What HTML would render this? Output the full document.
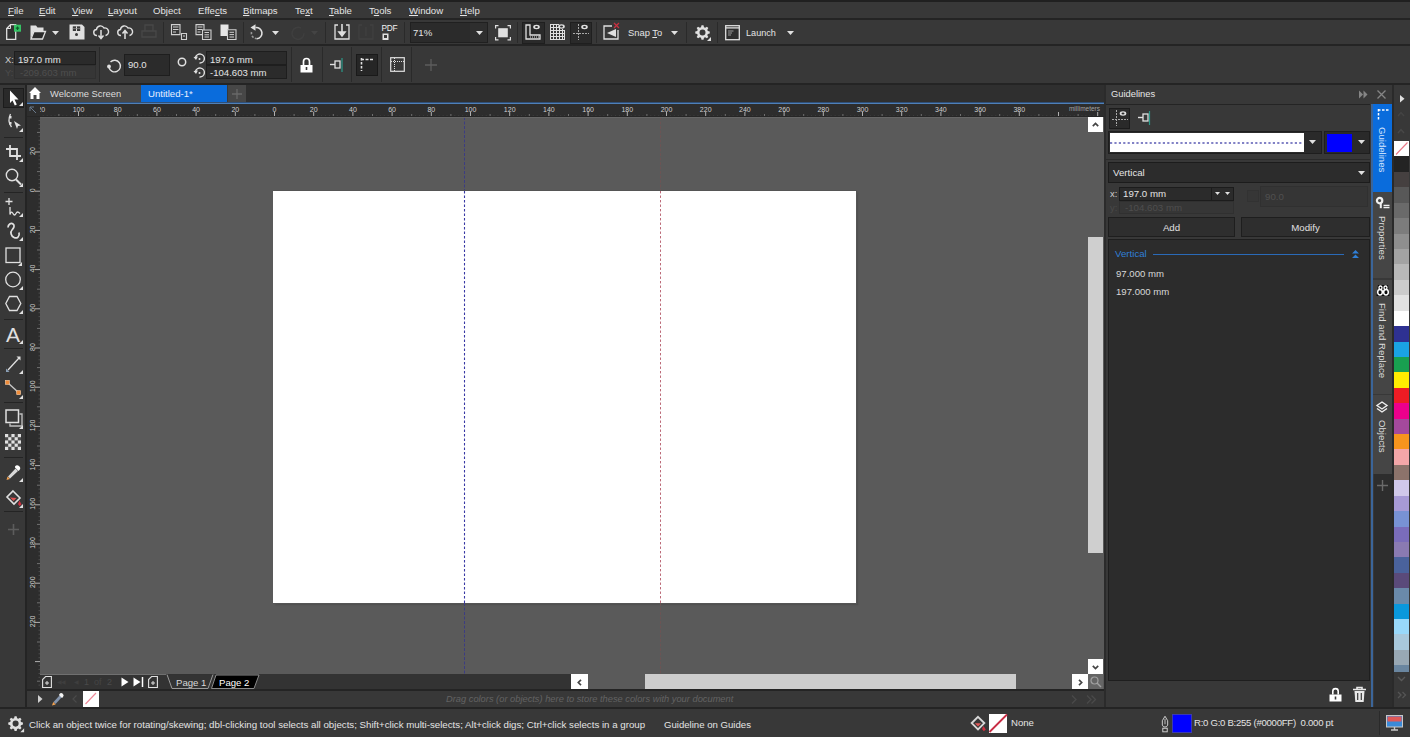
<!DOCTYPE html>
<html><head><meta charset="utf-8"><title>CorelDRAW - Untitled-1</title>
<style>
html,body{margin:0;padding:0;background:#383838;overflow:hidden}
body{width:1410px;height:737px;position:relative;font-family:"Liberation Sans",sans-serif;}
div,span,svg{position:absolute;box-sizing:border-box}
span{white-space:nowrap}
svg{overflow:visible}
u{text-decoration:underline;text-underline-offset:1px}
</style></head><body>
<div style="left:0px;top:0px;width:1410px;height:2px;background:#202020;"></div>
<div style="left:0px;top:18px;width:1410px;height:2px;background:#242424;"></div>
<span style="left:8px;top:3px;height:15px;line-height:15px;font-size:9.6px;color:#e4e4e4;"><u>F</u>ile</span>
<span style="left:39px;top:3px;height:15px;line-height:15px;font-size:9.6px;color:#e4e4e4;"><u>E</u>dit</span>
<span style="left:72px;top:3px;height:15px;line-height:15px;font-size:9.6px;color:#e4e4e4;"><u>V</u>iew</span>
<span style="left:108px;top:3px;height:15px;line-height:15px;font-size:9.6px;color:#e4e4e4;"><u>L</u>ayout</span>
<span style="left:153px;top:3px;height:15px;line-height:15px;font-size:9.6px;color:#e4e4e4;">Ob<u>j</u>ect</span>
<span style="left:198px;top:3px;height:15px;line-height:15px;font-size:9.6px;color:#e4e4e4;">Effe<u>c</u>ts</span>
<span style="left:243px;top:3px;height:15px;line-height:15px;font-size:9.6px;color:#e4e4e4;"><u>B</u>itmaps</span>
<span style="left:295px;top:3px;height:15px;line-height:15px;font-size:9.6px;color:#e4e4e4;">Te<u>x</u>t</span>
<span style="left:329px;top:3px;height:15px;line-height:15px;font-size:9.6px;color:#e4e4e4;"><u>T</u>able</span>
<span style="left:369px;top:3px;height:15px;line-height:15px;font-size:9.6px;color:#e4e4e4;">T<u>o</u>ols</span>
<span style="left:409px;top:3px;height:15px;line-height:15px;font-size:9.6px;color:#e4e4e4;"><u>W</u>indow</span>
<span style="left:460px;top:3px;height:15px;line-height:15px;font-size:9.6px;color:#e4e4e4;"><u>H</u>elp</span>
<div style="left:0px;top:44px;width:1410px;height:2px;background:#242424;"></div>
<div style="left:163px;top:22px;width:1px;height:21px;background:#2a2a2a;"></div>
<div style="left:243px;top:22px;width:1px;height:21px;background:#2a2a2a;"></div>
<div style="left:325px;top:22px;width:1px;height:21px;background:#2a2a2a;"></div>
<div style="left:404px;top:22px;width:1px;height:21px;background:#2a2a2a;"></div>
<div style="left:517px;top:22px;width:1px;height:21px;background:#2a2a2a;"></div>
<div style="left:596px;top:22px;width:1px;height:21px;background:#2a2a2a;"></div>
<div style="left:686px;top:22px;width:1px;height:21px;background:#2a2a2a;"></div>
<div style="left:717px;top:22px;width:1px;height:21px;background:#2a2a2a;"></div>
<svg style="left:6px;top:24px;" width="16" height="16" viewBox="0 0 16 16"><path d="M0.700 15.300v-10.800l3.800-3.800h5.200v14.600z" fill="#303030" stroke="#e0e0e0" stroke-width="1.300"/><path d="M0.700 4.500h3.800v-3.800" fill="none" stroke="#e0e0e0" stroke-width="1"/><rect x="8" y="0.700" width="7" height="7" fill="#35c264"/><path d="M11.500 2.500v3.400M9.800 4.200h3.400" stroke="#0d5a2a" stroke-width="1.300"/></svg>
<svg style="left:30px;top:24px;" width="16" height="16" viewBox="0 0 16 16"><path d="M0.500 15V1.500h5.500l1.500 2H13.500v3.500H4z" fill="#e0e0e0"/><path d="M1 15l3-7.500h11.500l-3 7.500z" fill="#2c2c2c" stroke="#e0e0e0" stroke-width="1.300"/></svg>
<svg style="left:52px;top:31px;" width="7" height="4" viewBox="0 0 7 4"><path d="M0 0h7l-3.5 4z" fill="#e0e0e0"/></svg>
<svg style="left:69px;top:24px;" width="16" height="16" viewBox="0 0 16 16"><path d="M0.500 0.500h12.500l2.500 2.500v12.500h-15z" fill="#e0e0e0"/><rect x="3.800" y="2.300" width="7.400" height="4.700" fill="#3a3a3a"/><rect x="7" y="2.300" width="1" height="4.700" fill="#e0e0e0"/><rect x="3.800" y="4.300" width="7.400" height="0.700" fill="#8a8a8a"/><circle cx="7.500" cy="10.500" r="1.500" fill="#3a3a3a"/></svg>
<svg style="left:93px;top:24px;" width="16" height="16" viewBox="0 0 16 16"><path d="M4 11.5a3 3 0 0 1 -.5-6a4 4 0 0 1 7.5-1.5a3.2 3.2 0 0 1 1.5 7.5" fill="none" stroke="#e0e0e0" stroke-width="1.4"/><path d="M8 6v8M5.5 11.5L8 14.5l2.5-3" fill="none" stroke="#e0e0e0" stroke-width="1.5"/></svg>
<svg style="left:117px;top:24px;" width="16" height="16" viewBox="0 0 16 16"><path d="M4 11.5a3 3 0 0 1 -.5-6a4 4 0 0 1 7.5-1.5a3.2 3.2 0 0 1 1.5 7.5" fill="none" stroke="#e0e0e0" stroke-width="1.4"/><path d="M8 15V7M5.5 9.5L8 6.5l2.5 3" fill="none" stroke="#e0e0e0" stroke-width="1.5"/></svg>
<svg style="left:141px;top:24px;" width="16" height="16" viewBox="0 0 16 16"><path d="M4 7V1h8v6M1 7h14v6H1z" fill="none" stroke="#474747" stroke-width="1.4"/></svg>
<svg style="left:170px;top:24px;" width="17" height="16" viewBox="0 0 17 16"><path d="M1.500 0.600h8.500v10h-8.500zM3 3h5.500M3 5.500h5.500M3 8h3" fill="none" stroke="#d0d0d0" stroke-width="1.100"/><path d="M11.500 9.500h5v6h-5zM13 12h2" fill="none" stroke="#d0d0d0" stroke-width="1.100"/></svg>
<svg style="left:195px;top:24px;" width="17" height="16" viewBox="0 0 17 16"><path d="M1 0.600h8v10h-8zM2.500 3h5M2.500 5.500h5M2.500 8h3" fill="none" stroke="#d0d0d0" stroke-width="1.100"/><path d="M7.500 6h8.500v9.500h-8.500z" fill="#383838" stroke="#d0d0d0" stroke-width="1.100"/><path d="M9.500 8.500h4.500M9.500 10.800h4.500M9.500 13h4.500" stroke="#d0d0d0" stroke-width="1"/></svg>
<svg style="left:220px;top:24px;" width="17" height="16" viewBox="0 0 17 16"><path d="M0.500 0.500h8v11.500h-8z" fill="#e6e6e6"/><path d="M7.500 5.700h8.500v9.800h-8.500z" fill="#383838" stroke="#d0d0d0" stroke-width="1.100"/><path d="M9.500 8.300h4.500M9.500 10.600h4.500M9.500 13h4.500" stroke="#d0d0d0" stroke-width="1"/></svg>
<svg style="left:249px;top:24px;" width="16" height="16" viewBox="0 0 16 16"><path d="M6.500 3.500a5.600 5.600 0 0 1 1.500 11.300" fill="none" stroke="#e0e0e0" stroke-width="1.600"/><path d="M8 14.800a5.600 5.600 0 0 1 -5.300-7.300" fill="none" stroke="#9a9a9a" stroke-width="1.600" stroke-dasharray="2.200 1.600"/><path d="M1.500 3.500l5-3.300v6.600z" fill="#e0e0e0"/></svg>
<svg style="left:272px;top:31px;" width="7" height="4" viewBox="0 0 7 4"><path d="M0 0h7l-3.5 4z" fill="#e0e0e0"/></svg>
<svg style="left:290px;top:24px;" width="16" height="16" viewBox="0 0 16 16"><path d="M11 4.2a6 6 0 1 0 3 5" fill="none" stroke="#3f3f3f" stroke-width="1.5"/></svg>
<svg style="left:311px;top:31px;" width="7" height="4" viewBox="0 0 7 4"><path d="M0 0h7l-3.5 4z" fill="#444444"/></svg>
<svg style="left:334px;top:24px;" width="16" height="16" viewBox="0 0 16 16"><path d="M4 1H1v14h14V1h-3" fill="none" stroke="#e0e0e0" stroke-width="1.3"/><path d="M8 0v10M5 8l3 4 3-4z" fill="#e0e0e0" stroke="#e0e0e0" stroke-width="1.6"/></svg>
<svg style="left:358px;top:24px;" width="16" height="16" viewBox="0 0 16 16"><path d="M4 1H1v14h14V1h-3M8 12V3" fill="none" stroke="#404040" stroke-width="1.3"/></svg>
<span style="left:381.5px;top:24px;height:9px;line-height:9px;font-size:8.3px;color:#f2f2f2;letter-spacing:-0.3px">PDF</span>
<svg style="left:382px;top:33px;" width="8" height="8" viewBox="0 0 8 8"><rect x="0.5" y="0.5" width="6" height="6.5" fill="#e0e0e0"/><rect x="2" y="2" width="3" height="3" fill="#383838"/></svg>
<div style="left:410px;top:22px;width:78px;height:21px;background:#2b2b2b;border:1px solid #202020"></div>
<span style="left:413px;top:22px;height:21px;line-height:21px;font-size:9.6px;color:#e4e4e4;">71%</span>
<div style="left:470px;top:23px;width:17px;height:19px;background:#2e2e2e;"></div>
<svg style="left:476px;top:31px;" width="7" height="4" viewBox="0 0 7 4"><path d="M0 0h7l-3.5 4z" fill="#e0e0e0"/></svg>
<svg style="left:494.5px;top:24.5px;" width="16" height="15.5" viewBox="0 0 16 15.5"><rect x="3.200" y="3.200" width="9.600" height="9.100" fill="#e0e0e0"/><path d="M0.600 3.500V0.600H3.500M12.500 0.600h2.900V3.500M15.400 12v2.900H12.500M3.500 14.900H0.600V12" fill="none" stroke="#e0e0e0" stroke-width="1.200"/></svg>
<div style="left:522px;top:22px;width:23px;height:22px;background:#2a2a2a;border:1px solid #1f1f1f"></div>
<svg style="left:525px;top:24px;" width="16" height="16" viewBox="0 0 16 16"><path d="M1 1h4v10h10v4H1z" fill="none" stroke="#e0e0e0" stroke-width="1.3"/><ellipse cx="11.5" cy="3" rx="3.300" ry="2.200" fill="#e0e0e0"/><ellipse cx="11.5" cy="3" rx="1.500" ry="0.900" fill="#2a2a2a"/><path d="M5 13h9" stroke="#e0e0e0" stroke-width="1" stroke-dasharray="1 1"/></svg>
<svg style="left:549px;top:24px;" width="17" height="16" viewBox="0 0 17 16"><path d="M1 3.5h11M1 6.5h15M1 9.5h15M1 12.5h15M1 15.5h15M1 0.5h9 M1.5 0v16M4.5 0v16M7.5 0v16M10.5 3v13M13.5 5v11M15.500 6v10" fill="none" stroke="#e0e0e0" stroke-width="1"/><ellipse cx="12.5" cy="2.5" rx="3.300" ry="2.200" fill="#e0e0e0"/><ellipse cx="12.5" cy="2.5" rx="1.500" ry="0.900" fill="#2a2a2a"/></svg>
<div style="left:570px;top:22px;width:22px;height:22px;background:#2a2a2a;border:1px solid #1f1f1f"></div>
<svg style="left:573px;top:24px;" width="16" height="16" viewBox="0 0 16 16"><path d="M5.500 0v16M0 9.500h16" fill="none" stroke="#aaa" stroke-width="1" stroke-dasharray="2 1"/><ellipse cx="11.5" cy="3" rx="3.300" ry="2.200" fill="#e0e0e0"/><ellipse cx="11.5" cy="3" rx="1.500" ry="0.900" fill="#2a2a2a"/></svg>
<svg style="left:603px;top:23px;" width="18" height="18" viewBox="0 0 18 18"><path d="M9 3H1v13h14V7" fill="none" stroke="#e0e0e0" stroke-width="1.3"/><path d="M4 10l9-4v8z" fill="#e0e0e0"/><path d="M11 0l5 5M16 0l-5 5" stroke="#c83040" stroke-width="1.300"/></svg>
<span style="left:628px;top:22px;height:21px;line-height:21px;font-size:9.4px;color:#e4e4e4;">Snap <u>T</u>o</span>
<svg style="left:671px;top:31px;" width="7" height="4" viewBox="0 0 7 4"><path d="M0 0h7l-3.5 4z" fill="#e0e0e0"/></svg>
<svg style="left:694.5px;top:24.5px;" width="18" height="18" viewBox="0 0 18 18"><path d="M12.79 6.00 L14.73 6.51 L14.73 8.49 L12.79 9.00 L12.30 10.18 L13.32 11.91 L11.91 13.32 L10.18 12.30 L9.00 12.79 L8.49 14.73 L6.51 14.73 L6.00 12.79 L4.82 12.30 L3.09 13.32 L1.68 11.91 L2.70 10.18 L2.21 9.00 L0.27 8.49 L0.27 6.51 L2.21 6.00 L2.70 4.82 L1.68 3.09 L3.09 1.68 L4.82 2.70 L6.00 2.21 L6.51 0.27 L8.49 0.27 L9.00 2.21 L10.18 2.70 L11.91 1.68 L13.32 3.09 L12.30 4.82Z M10.500 7.500a3 3 0 1 0 -6 0a3 3 0 1 0 6 0Z" fill="#e0e0e0" fill-rule="evenodd"/><path d="M16 12v4H12z" fill="#e0e0e0"/></svg>
<svg style="left:725px;top:24.5px;" width="15" height="15.5" viewBox="0 0 15 15.5"><rect x="0.700" y="0.700" width="13.600" height="14" fill="#2e2e2e" stroke="#e0e0e0" stroke-width="1.300"/><path d="M0.700 2.900h13.600" stroke="#e0e0e0" stroke-width="1.300"/><path d="M3 6h5.500M3 8h4M3 10h3" stroke="#9a9a9a" stroke-width="1"/></svg>
<span style="left:746px;top:22.6px;height:21px;line-height:21px;font-size:9.15px;color:#e4e4e4;">Launch</span>
<svg style="left:786.5px;top:31px;" width="7" height="4" viewBox="0 0 7 4"><path d="M0 0h7l-3.5 4z" fill="#e0e0e0"/></svg>
<div style="left:0px;top:83px;width:1410px;height:2px;background:#242424;"></div>
<span style="left:5px;top:52.5px;height:13px;line-height:13px;font-size:9.4px;color:#cfcfcf;">X:</span>
<div style="left:14px;top:51px;width:82px;height:14px;background:#2b2b2b;border:1px solid #1e1e1e"></div>
<span style="left:18px;top:52.5px;height:14px;line-height:14px;font-size:9.6px;color:#e4e4e4;">197.0 mm</span>
<div style="left:14px;top:65px;width:82px;height:14px;background:#363636;border:1px solid #303030"></div>
<span style="left:5px;top:66px;height:14px;line-height:14px;font-size:9.4px;color:#4c4c4c;">Y:</span>
<span style="left:20px;top:66px;height:14px;line-height:14px;font-size:9.6px;color:#4e4e4e;">-209.603 mm</span>
<div style="left:99px;top:47px;width:1px;height:35px;background:#2a2a2a;"></div>
<div style="left:291px;top:47px;width:1px;height:35px;background:#2a2a2a;"></div>
<div style="left:322px;top:47px;width:1px;height:35px;background:#2a2a2a;"></div>
<div style="left:351px;top:47px;width:1px;height:35px;background:#2a2a2a;"></div>
<div style="left:381px;top:47px;width:1px;height:35px;background:#2a2a2a;"></div>
<div style="left:411px;top:47px;width:1px;height:35px;background:#2a2a2a;"></div>
<svg style="left:107px;top:58px;" width="15" height="15" viewBox="0 0 15 15"><path d="M3.500 4a5.800 5.800 0 1 1 -1.500 5.500" fill="none" stroke="#e0e0e0" stroke-width="1.4"/><circle cx="2" cy="8.500" r="1.900" fill="#e0e0e0"/></svg>
<div style="left:124px;top:54px;width:46px;height:22px;background:#2b2b2b;border:1px solid #1e1e1e"></div>
<span style="left:128px;top:54px;height:22px;line-height:22px;font-size:9.6px;color:#e4e4e4;">90.0</span>
<svg style="left:177px;top:57px;" width="10" height="10" viewBox="0 0 10 10"><circle cx="5" cy="5" r="3.700" fill="none" stroke="#e0e0e0" stroke-width="1.5"/></svg>
<svg style="left:193px;top:52px;" width="13" height="13" viewBox="0 0 13 13"><path d="M2.500 5.500a4.500 4.500 0 1 1 4 5.500" fill="none" stroke="#e0e0e0" stroke-width="1.400"/><path d="M0.500 5l2.500 3 2-3.500z" fill="#e0e0e0"/><circle cx="6.500" cy="7" r="1" fill="#e0e0e0"/></svg>
<svg style="left:193px;top:65.5px;" width="13" height="13" viewBox="0 0 13 13"><path d="M2.500 5.500a4.500 4.500 0 1 1 4 5.500" fill="none" stroke="#e0e0e0" stroke-width="1.400"/><path d="M0.500 5l2.500 3 2-3.500z" fill="#e0e0e0"/><circle cx="6.500" cy="7" r="1" fill="#e0e0e0"/></svg>
<div style="left:206px;top:51px;width:81px;height:14px;background:#2b2b2b;border:1px solid #1e1e1e"></div>
<div style="left:206px;top:65px;width:81px;height:14px;background:#2b2b2b;border:1px solid #1e1e1e"></div>
<span style="left:210px;top:52.5px;height:14px;line-height:14px;font-size:9.6px;color:#e4e4e4;">197.0 mm</span>
<span style="left:210px;top:66px;height:14px;line-height:14px;font-size:9.6px;color:#e4e4e4;">-104.603 mm</span>
<svg style="left:300px;top:57px;" width="13" height="16" viewBox="0 0 13 16"><path d="M3.500 8V4.500a3 3 0 0 1 6 0V8" fill="none" stroke="#fff" stroke-width="1.700"/><rect x="0.500" y="8" width="12" height="7.500" fill="#fff"/><rect x="5.700" y="10" width="1.600" height="3" fill="#383838"/></svg>
<svg style="left:330px;top:58px;" width="14" height="14" viewBox="0 0 14 14"><path d="M0 6.500h5" stroke="#e0e0e0" stroke-width="1.400"/><rect x="5" y="3" width="5" height="7" fill="none" stroke="#e0e0e0" stroke-width="1.300"/><path d="M12 0v14" stroke="#2a9a8a" stroke-width="1.200"/></svg>
<div style="left:356px;top:54px;width:22px;height:22px;background:#262626;border:1px solid #1a1a1a"></div>
<svg style="left:359px;top:57px;" width="16" height="16" viewBox="0 0 16 16"><path d="M2.500 1v13" stroke="#e0e0e0" stroke-width="1.600" stroke-dasharray="2.500 1.500"/><path d="M2 2.500h13" stroke="#e0e0e0" stroke-width="1.600" stroke-dasharray="3 1.500"/></svg>
<svg style="left:390px;top:57px;" width="15" height="15" viewBox="0 0 15 15"><rect x="0.700" y="0.700" width="13.600" height="13.600" fill="none" stroke="#e0e0e0" stroke-width="1.200"/><path d="M4.500 1v13M1 4.500h13" stroke="#e0e0e0" stroke-width="1" stroke-dasharray="1 1"/></svg>
<svg style="left:425px;top:59px;" width="12" height="12" viewBox="0 0 12 12"><path d="M6 0v12M0 6h12" stroke="#5c5c5c" stroke-width="1.300"/></svg>
<div style="left:246px;top:85px;width:858px;height:18px;background:#2f2f2f;"></div>
<div style="left:27px;top:85px;width:114px;height:18px;background:#474747;"></div>
<svg style="left:29px;top:87px;" width="12" height="12" viewBox="0 0 12 12"><path d="M6 0l6 6h-1.500v6h-3v-4h-3v4h-3v-6H0z" fill="#fff"/></svg>
<span style="left:50px;top:85px;height:18px;line-height:18px;font-size:9.4px;color:#dcdcdc;">Welcome Screen</span>
<div style="left:141px;top:85px;width:86px;height:18px;background:#0a6cdc;"></div>
<span style="left:148px;top:85px;height:18px;line-height:18px;font-size:9.6px;color:#e8f0ff;">Untitled-1*</span>
<div style="left:228px;top:85px;width:18px;height:18px;background:#474747;"></div>
<svg style="left:232px;top:89px;" width="10" height="10" viewBox="0 0 10 10"><path d="M5 0v10M0 5h10" stroke="#686868" stroke-width="1.300"/></svg>
<div style="left:27px;top:102px;width:1077px;height:1px;background:#2f4f78;"></div>
<div style="left:27px;top:103px;width:1077px;height:1px;background:#4f80b8;"></div>
<div style="left:25px;top:85px;width:2px;height:623px;background:#242424;"></div>
<div style="left:3px;top:88px;width:21px;height:20px;background:#2a2a2a;border:1px solid #1c1c1c"></div>
<div style="left:4px;top:136.5px;width:19px;height:1px;background:#242424;"></div>
<div style="left:4px;top:191.5px;width:19px;height:1px;background:#242424;"></div>
<div style="left:4px;top:318.5px;width:19px;height:1px;background:#242424;"></div>
<div style="left:4px;top:348px;width:19px;height:1px;background:#242424;"></div>
<div style="left:4px;top:402px;width:19px;height:1px;background:#242424;"></div>
<div style="left:4px;top:456.5px;width:19px;height:1px;background:#242424;"></div>
<div style="left:4px;top:510.5px;width:19px;height:1px;background:#242424;"></div>
<svg style="left:7px;top:90px;" width="14" height="17" viewBox="0 0 14 17"><path d="M3 0.500l8.500 9h-4l2.300 5-2 1-2.300-5L3 13z" fill="#fff"/></svg>
<svg style="left:19px;top:102px;" width="4" height="4" viewBox="0 0 4 4"><path d="M4 0v4H0z" fill="#e0e0e0"/></svg>
<svg style="left:6px;top:113px;" width="16" height="20" viewBox="0 0 16 20"><path d="M4.500 1c-2 4-2 9 1 13" fill="none" stroke="#e0e0e0" stroke-width="1.300"/><rect x="3" y="3" width="2.500" height="2.500" fill="#e0e0e0"/><rect x="3" y="9" width="2.500" height="2.500" fill="#e0e0e0"/><path d="M8 8l7 4.500-3 .5-1 3z" fill="#e0e0e0"/></svg>
<svg style="left:19px;top:128px;" width="4" height="4" viewBox="0 0 4 4"><path d="M4 0v4H0z" fill="#e0e0e0"/></svg>
<svg style="left:6px;top:144.5px;" width="15" height="15" viewBox="0 0 15 15"><path d="M4 0v11H15M0 4h11V15" fill="none" stroke="#e0e0e0" stroke-width="1.800"/></svg>
<svg style="left:19px;top:158px;" width="4" height="4" viewBox="0 0 4 4"><path d="M4 0v4H0z" fill="#e0e0e0"/></svg>
<svg style="left:5px;top:168px;" width="17" height="18" viewBox="0 0 17 18"><circle cx="7" cy="7" r="5.700" fill="none" stroke="#e0e0e0" stroke-width="1.400"/><path d="M11 11.500l5 5" stroke="#e0e0e0" stroke-width="2"/></svg>
<svg style="left:19px;top:183px;" width="4" height="4" viewBox="0 0 4 4"><path d="M4 0v4H0z" fill="#e0e0e0"/></svg>
<svg style="left:5px;top:198px;" width="17" height="19" viewBox="0 0 17 19"><path d="M4 0v7M0.500 3.500h7" stroke="#e0e0e0" stroke-width="1.300"/><path d="M5 9v7.500c1-3 2-3 3-1s2 2 3 0 2-2 4 0" fill="none" stroke="#e0e0e0" stroke-width="1.300"/></svg>
<svg style="left:19px;top:213px;" width="4" height="4" viewBox="0 0 4 4"><path d="M4 0v4H0z" fill="#e0e0e0"/></svg>
<svg style="left:6px;top:222px;" width="15" height="19" viewBox="0 0 15 19"><path d="M2 5.500c0-3 3-5 5-3.500s1 4-1 6-1 6 2 7.500 6-1 5-5" fill="none" stroke="#e0e0e0" stroke-width="1.700"/></svg>
<svg style="left:19px;top:237px;" width="4" height="4" viewBox="0 0 4 4"><path d="M4 0v4H0z" fill="#e0e0e0"/></svg>
<svg style="left:5px;top:247px;" width="17" height="19" viewBox="0 0 17 19"><rect x="1" y="1" width="14" height="14.500" fill="none" stroke="#e0e0e0" stroke-width="1.300"/></svg>
<svg style="left:18px;top:262px;" width="4" height="4" viewBox="0 0 4 4"><path d="M4 0v4H0z" fill="#e0e0e0"/></svg>
<svg style="left:5px;top:271px;" width="17" height="19" viewBox="0 0 17 19"><circle cx="8" cy="8.500" r="7.300" fill="none" stroke="#e0e0e0" stroke-width="1.300"/></svg>
<svg style="left:19px;top:286px;" width="4" height="4" viewBox="0 0 4 4"><path d="M4 0v4H0z" fill="#e0e0e0"/></svg>
<svg style="left:5px;top:295px;" width="17" height="19" viewBox="0 0 17 19"><path d="M4.500 1.500h7.500l3.800 7-3.800 7H4.500L0.800 8.500z" fill="none" stroke="#e0e0e0" stroke-width="1.300"/></svg>
<svg style="left:19px;top:310px;" width="4" height="4" viewBox="0 0 4 4"><path d="M4 0v4H0z" fill="#e0e0e0"/></svg>
<span style="left:6px;top:323px;height:24px;line-height:24px;font-size:21px;color:#e0e0e0;">A</span>
<svg style="left:19px;top:339.5px;" width="4" height="4" viewBox="0 0 4 4"><path d="M4 0v4H0z" fill="#e0e0e0"/></svg>
<svg style="left:5px;top:355px;" width="17" height="19" viewBox="0 0 17 19"><path d="M3 15L14 3" stroke="#e0e0e0" stroke-width="1.300"/><path d="M11.500 1.500h4v4z" fill="#e0e0e0"/><path d="M1 13.500l3.500 3.500h-3.500z" fill="#8aa0b8"/></svg>
<svg style="left:19px;top:370px;" width="4" height="4" viewBox="0 0 4 4"><path d="M4 0v4H0z" fill="#e0e0e0"/></svg>
<svg style="left:4px;top:379px;" width="19" height="20" viewBox="0 0 19 20"><path d="M3.500 3.500L14.500 13.500" stroke="#c8c8c8" stroke-width="1.400"/><rect x="1.500" y="1.500" width="3.800" height="3.800" fill="#f28c38" stroke="#f6c79c" stroke-width="0.700"/><rect x="12.700" y="11.700" width="3.800" height="3.800" fill="#f28c38" stroke="#f6c79c" stroke-width="0.700"/></svg>
<svg style="left:19px;top:395px;" width="4" height="4" viewBox="0 0 4 4"><path d="M4 0v4H0z" fill="#e0e0e0"/></svg>
<svg style="left:5px;top:409px;" width="18" height="19" viewBox="0 0 18 19"><path d="M5 14.500v2.500h12V5h-2.500" fill="none" stroke="#bdbdbd" stroke-width="1.400"/><rect x="1" y="1" width="12.500" height="12.500" fill="#383838" stroke="#e0e0e0" stroke-width="1.500"/></svg>
<svg style="left:19px;top:425px;" width="4" height="4" viewBox="0 0 4 4"><path d="M4 0v4H0z" fill="#e0e0e0"/></svg>
<svg style="left:5px;top:434px;" width="16" height="16" viewBox="0 0 16 16"><rect x="0" y="0" width="16" height="16" fill="#4a4a4a"/><rect x="0.0" y="0.0" width="3.200" height="3.200" fill="#e0e0e0"/><rect x="0.0" y="6.4" width="3.200" height="3.200" fill="#e0e0e0"/><rect x="0.0" y="12.8" width="3.200" height="3.200" fill="#e0e0e0"/><rect x="3.2" y="3.2" width="3.200" height="3.200" fill="#e0e0e0"/><rect x="3.2" y="9.6" width="3.200" height="3.200" fill="#e0e0e0"/><rect x="6.4" y="0.0" width="3.200" height="3.200" fill="#e0e0e0"/><rect x="6.4" y="6.4" width="3.200" height="3.200" fill="#e0e0e0"/><rect x="6.4" y="12.8" width="3.200" height="3.200" fill="#e0e0e0"/><rect x="9.6" y="3.2" width="3.200" height="3.200" fill="#e0e0e0"/><rect x="9.6" y="9.6" width="3.200" height="3.200" fill="#e0e0e0"/><rect x="12.8" y="0.0" width="3.200" height="3.200" fill="#e0e0e0"/><rect x="12.8" y="6.4" width="3.200" height="3.200" fill="#e0e0e0"/><rect x="12.8" y="12.8" width="3.200" height="3.200" fill="#e0e0e0"/></svg>
<svg style="left:5px;top:463px;" width="18" height="19" viewBox="0 0 18 19"><path d="M3 13.500l7.500-8 2.500 2.500-8 7.500z" fill="#d8d8d8"/><path d="M1.500 17l1-3.500 2.500 2.500z" fill="#f0a050"/><path d="M10 3.500a2.500 2.500 0 0 1 4.500 3.500l-1 1-3.500-3.500z" fill="#fff"/></svg>
<svg style="left:19px;top:478px;" width="4" height="4" viewBox="0 0 4 4"><path d="M4 0v4H0z" fill="#e0e0e0"/></svg>
<svg style="left:5px;top:488.5px;" width="19" height="20" viewBox="0 0 19 20"><path d="M8 2l7 7-6 6-7-7z" fill="none" stroke="#e0e0e0" stroke-width="1.600"/><path d="M5 8.500l3.500 3.500 3-3z" fill="#e05050"/><path d="M14.500 11.500l2 4-2 1.500-1.500-2z" fill="#d03040"/></svg>
<svg style="left:19px;top:504px;" width="4" height="4" viewBox="0 0 4 4"><path d="M4 0v4H0z" fill="#e0e0e0"/></svg>
<svg style="left:8px;top:524px;" width="11" height="11" viewBox="0 0 11 11"><path d="M5.500 0v11M0 5.500h11" stroke="#5c5c5c" stroke-width="1.600"/></svg>
<div style="left:27px;top:104px;width:1077px;height:13px;background:#2d2d2d;"></div>
<div style="left:27px;top:104px;width:13px;height:586px;background:#2d2d2d;"></div>
<div style="left:40px;top:117px;width:1064px;height:573px;background:#5a5a5a;"></div>
<div style="left:272.5px;top:190px;width:584px;height:413.5px;background:#555555;box-shadow:1.5px 1.5px 1.5px rgba(0,0,0,0.10)"></div>
<div style="left:273px;top:190.5px;width:583px;height:412.5px;background:#ffffff;"></div>
<svg style="left:464px;top:117px;" width="1" height="73" viewBox="0 0 1 73"><path d="M0.500 0V73" stroke="#3c3c82" stroke-width="1" stroke-dasharray="3 1.500"/></svg>
<svg style="left:464px;top:603px;" width="1" height="72" viewBox="0 0 1 72"><path d="M0.500 0V72" stroke="#3c3c82" stroke-width="1" stroke-dasharray="3 1.500"/></svg>
<svg style="left:464px;top:190.5px;" width="1" height="412.5" viewBox="0 0 1 412.5"><path d="M0.500 0V412.5" stroke="#3838a4" stroke-width="1.1" stroke-dasharray="2.400 2.100"/></svg>
<svg style="left:660px;top:117px;" width="1" height="73" viewBox="0 0 1 73"><path d="M0.500 0V73" stroke="#6b5454" stroke-width="1" stroke-dasharray="3 1.500"/></svg>
<svg style="left:660px;top:603px;" width="1" height="72" viewBox="0 0 1 72"><path d="M0.500 0V72" stroke="#6b5454" stroke-width="1" stroke-dasharray="3 1.500"/></svg>
<svg style="left:660px;top:190.5px;" width="1" height="412.5" viewBox="0 0 1 412.5"><path d="M0.500 0V412.5" stroke="#bc6a78" stroke-width="1" stroke-dasharray="2.400 2.100"/></svg>
<svg style="left:27px;top:104px;" width="1077" height="13" viewBox="0 0 1077 13"><path d="M12.3 8v5 M51.5 8v5 M90.7 8v5 M129.9 8v5 M169.1 8v5 M208.3 8v5 M247.5 8v5 M286.7 8v5 M325.9 8v5 M365.1 8v5 M404.3 8v5 M443.5 8v5 M482.7 8v5 M521.9 8v5 M561.1 8v5 M600.3 8v5 M639.5 8v5 M678.7 8v5 M717.9 8v5 M757.1 8v5 M796.3 8v5 M835.5 8v5 M874.7 8v5 M913.9 8v5 M953.1 8v5 M992.3 8v5 M1031.5 8v5 M1070.7 8v5" stroke="#c0c0c0" stroke-width="0.900" fill="none"/><path d="M31.9 10v3 M71.1 10v3 M110.3 10v3 M149.5 10v3 M188.7 10v3 M227.9 10v3 M267.1 10v3 M306.3 10v3 M345.5 10v3 M384.7 10v3 M423.9 10v3 M463.1 10v3 M502.3 10v3 M541.5 10v3 M580.7 10v3 M619.9 10v3 M659.1 10v3 M698.3 10v3 M737.5 10v3 M776.7 10v3 M815.9 10v3 M855.1 10v3 M894.3 10v3 M933.5 10v3 M972.7 10v3 M1011.9 10v3 M1051.1 10v3" stroke="#787878" stroke-width="0.900" fill="none"/><path d="M16.2 11.500v1.500 M20.1 11.500v1.500 M24.1 11.500v1.500 M28.0 11.500v1.500 M35.8 11.500v1.500 M39.7 11.500v1.500 M43.7 11.500v1.500 M47.6 11.500v1.500 M55.4 11.500v1.500 M59.3 11.500v1.500 M63.3 11.500v1.500 M67.2 11.500v1.500 M75.0 11.500v1.500 M78.9 11.500v1.500 M82.9 11.500v1.500 M86.8 11.500v1.500 M94.6 11.500v1.500 M98.5 11.500v1.500 M102.5 11.500v1.500 M106.4 11.500v1.500 M114.2 11.500v1.500 M118.1 11.500v1.500 M122.1 11.500v1.500 M126.0 11.500v1.500 M133.8 11.500v1.500 M137.7 11.500v1.500 M141.7 11.500v1.500 M145.6 11.500v1.500 M153.4 11.500v1.500 M157.3 11.500v1.500 M161.3 11.500v1.500 M165.2 11.500v1.500 M173.0 11.500v1.500 M176.9 11.500v1.500 M180.9 11.500v1.500 M184.8 11.500v1.500 M192.6 11.500v1.500 M196.5 11.500v1.500 M200.5 11.500v1.500 M204.4 11.500v1.500 M212.2 11.500v1.500 M216.1 11.500v1.500 M220.1 11.500v1.500 M224.0 11.500v1.500 M231.8 11.500v1.500 M235.7 11.500v1.500 M239.7 11.500v1.500 M243.6 11.500v1.500 M251.4 11.500v1.500 M255.3 11.500v1.500 M259.3 11.500v1.500 M263.2 11.500v1.500 M271.0 11.500v1.500 M274.9 11.500v1.500 M278.9 11.500v1.500 M282.8 11.500v1.500 M290.6 11.500v1.500 M294.5 11.500v1.500 M298.5 11.500v1.500 M302.4 11.500v1.500 M310.2 11.500v1.500 M314.1 11.500v1.500 M318.1 11.500v1.500 M322.0 11.500v1.500 M329.8 11.500v1.500 M333.7 11.500v1.500 M337.7 11.500v1.500 M341.6 11.500v1.500 M349.4 11.500v1.500 M353.3 11.500v1.500 M357.3 11.500v1.500 M361.2 11.500v1.500 M369.0 11.500v1.500 M372.9 11.500v1.500 M376.9 11.500v1.500 M380.8 11.500v1.500 M388.6 11.500v1.500 M392.5 11.500v1.500 M396.5 11.500v1.500 M400.4 11.500v1.500 M408.2 11.500v1.500 M412.1 11.500v1.500 M416.1 11.500v1.500 M420.0 11.500v1.500 M427.8 11.500v1.500 M431.7 11.500v1.500 M435.7 11.500v1.500 M439.6 11.500v1.500 M447.4 11.500v1.500 M451.3 11.500v1.500 M455.3 11.500v1.500 M459.2 11.500v1.500 M467.0 11.500v1.500 M470.9 11.500v1.500 M474.9 11.500v1.500 M478.8 11.500v1.500 M486.6 11.500v1.500 M490.5 11.500v1.500 M494.5 11.500v1.500 M498.4 11.500v1.500 M506.2 11.500v1.500 M510.1 11.500v1.500 M514.1 11.500v1.500 M518.0 11.500v1.500 M525.8 11.500v1.500 M529.7 11.500v1.500 M533.7 11.500v1.500 M537.6 11.500v1.500 M545.4 11.500v1.500 M549.3 11.500v1.500 M553.3 11.500v1.500 M557.2 11.500v1.500 M565.0 11.500v1.500 M568.9 11.500v1.500 M572.9 11.500v1.500 M576.8 11.500v1.500 M584.6 11.500v1.500 M588.5 11.500v1.500 M592.5 11.500v1.500 M596.4 11.500v1.500 M604.2 11.500v1.500 M608.1 11.500v1.500 M612.1 11.500v1.500 M616.0 11.500v1.500 M623.8 11.500v1.500 M627.7 11.500v1.500 M631.7 11.500v1.500 M635.6 11.500v1.500 M643.4 11.500v1.500 M647.3 11.500v1.500 M651.3 11.500v1.500 M655.2 11.500v1.500 M663.0 11.500v1.500 M666.9 11.500v1.500 M670.9 11.500v1.500 M674.8 11.500v1.500 M682.6 11.500v1.500 M686.5 11.500v1.500 M690.5 11.500v1.500 M694.4 11.500v1.500 M702.2 11.500v1.500 M706.1 11.500v1.500 M710.1 11.500v1.500 M714.0 11.500v1.500 M721.8 11.500v1.500 M725.7 11.500v1.500 M729.7 11.500v1.500 M733.6 11.500v1.500 M741.4 11.500v1.500 M745.3 11.500v1.500 M749.3 11.500v1.500 M753.2 11.500v1.500 M761.0 11.500v1.500 M764.9 11.500v1.500 M768.9 11.500v1.500 M772.8 11.500v1.500 M780.6 11.500v1.500 M784.5 11.500v1.500 M788.5 11.500v1.500 M792.4 11.500v1.500 M800.2 11.500v1.500 M804.1 11.500v1.500 M808.1 11.500v1.500 M812.0 11.500v1.500 M819.8 11.500v1.500 M823.7 11.500v1.500 M827.7 11.500v1.500 M831.6 11.500v1.500 M839.4 11.500v1.500 M843.3 11.500v1.500 M847.3 11.500v1.500 M851.2 11.500v1.500 M859.0 11.500v1.500 M862.9 11.500v1.500 M866.9 11.500v1.500 M870.8 11.500v1.500 M878.6 11.500v1.500 M882.5 11.500v1.500 M886.5 11.500v1.500 M890.4 11.500v1.500 M898.2 11.500v1.500 M902.1 11.500v1.500 M906.1 11.500v1.500 M910.0 11.500v1.500 M917.8 11.500v1.500 M921.7 11.500v1.500 M925.7 11.500v1.500 M929.6 11.500v1.500 M937.4 11.500v1.500 M941.3 11.500v1.500 M945.3 11.500v1.500 M949.2 11.500v1.500 M957.0 11.500v1.500 M960.9 11.500v1.500 M964.9 11.500v1.500 M968.8 11.500v1.500 M976.6 11.500v1.500 M980.5 11.500v1.500 M984.5 11.500v1.500 M988.4 11.500v1.500 M996.2 11.500v1.500 M1000.1 11.500v1.500 M1004.1 11.500v1.500 M1008.0 11.500v1.500 M1015.8 11.500v1.500 M1019.7 11.500v1.500 M1023.7 11.500v1.500 M1027.6 11.500v1.500 M1035.4 11.500v1.500 M1039.3 11.500v1.500 M1043.3 11.500v1.500 M1047.2 11.500v1.500 M1055.0 11.500v1.500 M1058.9 11.500v1.500 M1062.9 11.500v1.500 M1066.8 11.500v1.500" stroke="#505050" stroke-width="0.900" fill="none"/><g font-size="7" fill="#d0d0d0" font-family="Liberation Sans, sans-serif"><text x="12.3" y="7.500" text-anchor="middle">120</text><text x="51.5" y="7.500" text-anchor="middle">100</text><text x="90.7" y="7.500" text-anchor="middle">80</text><text x="129.9" y="7.500" text-anchor="middle">60</text><text x="169.1" y="7.500" text-anchor="middle">40</text><text x="208.3" y="7.500" text-anchor="middle">20</text><text x="247.5" y="7.500" text-anchor="middle">0</text><text x="286.7" y="7.500" text-anchor="middle">20</text><text x="325.9" y="7.500" text-anchor="middle">40</text><text x="365.1" y="7.500" text-anchor="middle">60</text><text x="404.3" y="7.500" text-anchor="middle">80</text><text x="443.5" y="7.500" text-anchor="middle">100</text><text x="482.7" y="7.500" text-anchor="middle">120</text><text x="521.9" y="7.500" text-anchor="middle">140</text><text x="561.1" y="7.500" text-anchor="middle">160</text><text x="600.3" y="7.500" text-anchor="middle">180</text><text x="639.5" y="7.500" text-anchor="middle">200</text><text x="678.7" y="7.500" text-anchor="middle">220</text><text x="717.9" y="7.500" text-anchor="middle">240</text><text x="757.1" y="7.500" text-anchor="middle">260</text><text x="796.3" y="7.500" text-anchor="middle">280</text><text x="835.5" y="7.500" text-anchor="middle">300</text><text x="874.7" y="7.500" text-anchor="middle">320</text><text x="913.9" y="7.500" text-anchor="middle">340</text><text x="953.1" y="7.500" text-anchor="middle">360</text><text x="992.3" y="7.500" text-anchor="middle">380</text><text x="1073" y="6.500" text-anchor="end" font-size="6.500" fill="#a4a4a4">millimeters</text></g></svg>
<svg style="left:27px;top:104px;" width="13" height="586" viewBox="0 0 13 586"><path d="M8 48.0h5 M8 87.2h5 M8 126.4h5 M8 165.6h5 M8 204.8h5 M8 244.0h5 M8 283.2h5 M8 322.4h5 M8 361.6h5 M8 400.8h5 M8 440.0h5 M8 479.2h5 M8 518.4h5 M8 557.6h5" stroke="#c0c0c0" stroke-width="0.900" fill="none"/><path d="M10 28.4h3 M10 67.6h3 M10 106.8h3 M10 146.0h3 M10 185.2h3 M10 224.4h3 M10 263.6h3 M10 302.8h3 M10 342.0h3 M10 381.2h3 M10 420.4h3 M10 459.6h3 M10 498.8h3 M10 538.0h3 M10 577.2h3" stroke="#787878" stroke-width="0.900" fill="none"/><path d="M11.500 16.6h1.500 M11.500 20.6h1.500 M11.500 24.5h1.500 M11.500 32.3h1.500 M11.500 36.2h1.500 M11.500 40.2h1.500 M11.500 44.1h1.500 M11.500 51.9h1.500 M11.500 55.8h1.500 M11.500 59.8h1.500 M11.500 63.7h1.500 M11.500 71.5h1.500 M11.500 75.4h1.500 M11.500 79.4h1.500 M11.500 83.3h1.500 M11.500 91.1h1.500 M11.500 95.0h1.500 M11.500 99.0h1.500 M11.500 102.9h1.500 M11.500 110.7h1.500 M11.500 114.6h1.500 M11.500 118.6h1.500 M11.500 122.5h1.500 M11.500 130.3h1.500 M11.500 134.2h1.500 M11.500 138.2h1.500 M11.500 142.1h1.500 M11.500 149.9h1.500 M11.500 153.8h1.500 M11.500 157.8h1.500 M11.500 161.7h1.500 M11.500 169.5h1.500 M11.500 173.4h1.500 M11.500 177.4h1.500 M11.500 181.3h1.500 M11.500 189.1h1.500 M11.500 193.0h1.500 M11.500 197.0h1.500 M11.500 200.9h1.500 M11.500 208.7h1.500 M11.500 212.6h1.500 M11.500 216.6h1.500 M11.500 220.5h1.500 M11.500 228.3h1.500 M11.500 232.2h1.500 M11.500 236.2h1.500 M11.500 240.1h1.500 M11.500 247.9h1.500 M11.500 251.8h1.500 M11.500 255.8h1.500 M11.500 259.7h1.500 M11.500 267.5h1.500 M11.500 271.4h1.500 M11.500 275.4h1.500 M11.500 279.3h1.500 M11.500 287.1h1.500 M11.500 291.0h1.500 M11.500 295.0h1.500 M11.500 298.9h1.500 M11.500 306.7h1.500 M11.500 310.6h1.500 M11.500 314.6h1.500 M11.500 318.5h1.500 M11.500 326.3h1.500 M11.500 330.2h1.500 M11.500 334.2h1.500 M11.500 338.1h1.500 M11.500 345.9h1.500 M11.500 349.8h1.500 M11.500 353.8h1.500 M11.500 357.7h1.500 M11.500 365.5h1.500 M11.500 369.4h1.500 M11.500 373.4h1.500 M11.500 377.3h1.500 M11.500 385.1h1.500 M11.500 389.0h1.500 M11.500 393.0h1.500 M11.500 396.9h1.500 M11.500 404.7h1.500 M11.500 408.6h1.500 M11.500 412.6h1.500 M11.500 416.5h1.500 M11.500 424.3h1.500 M11.500 428.2h1.500 M11.500 432.2h1.500 M11.500 436.1h1.500 M11.500 443.9h1.500 M11.500 447.8h1.500 M11.500 451.8h1.500 M11.500 455.7h1.500 M11.500 463.5h1.500 M11.500 467.4h1.500 M11.500 471.4h1.500 M11.500 475.3h1.500 M11.500 483.1h1.500 M11.500 487.0h1.500 M11.500 491.0h1.500 M11.500 494.9h1.500 M11.500 502.7h1.500 M11.500 506.6h1.500 M11.500 510.6h1.500 M11.500 514.5h1.500 M11.500 522.3h1.500 M11.500 526.2h1.500 M11.500 530.2h1.500 M11.500 534.1h1.500 M11.500 541.9h1.500 M11.500 545.8h1.500 M11.500 549.8h1.500 M11.500 553.7h1.500 M11.500 561.5h1.500 M11.500 565.4h1.500 M11.500 569.4h1.500 M11.500 573.3h1.500 M11.500 581.1h1.500" stroke="#505050" stroke-width="0.900" fill="none"/><g font-size="7" fill="#d0d0d0" font-family="Liberation Sans, sans-serif"><text transform="translate(7.500 47.0) rotate(-90)" text-anchor="middle">20</text><text transform="translate(7.500 86.2) rotate(-90)" text-anchor="middle">0</text><text transform="translate(7.500 125.4) rotate(-90)" text-anchor="middle">20</text><text transform="translate(7.500 164.6) rotate(-90)" text-anchor="middle">40</text><text transform="translate(7.500 203.8) rotate(-90)" text-anchor="middle">60</text><text transform="translate(7.500 243.0) rotate(-90)" text-anchor="middle">80</text><text transform="translate(7.500 282.2) rotate(-90)" text-anchor="middle">100</text><text transform="translate(7.500 321.4) rotate(-90)" text-anchor="middle">120</text><text transform="translate(7.500 360.6) rotate(-90)" text-anchor="middle">140</text><text transform="translate(7.500 399.8) rotate(-90)" text-anchor="middle">160</text><text transform="translate(7.500 439.0) rotate(-90)" text-anchor="middle">180</text><text transform="translate(7.500 478.2) rotate(-90)" text-anchor="middle">200</text><text transform="translate(7.500 517.4) rotate(-90)" text-anchor="middle">220</text></g></svg>
<div style="left:27px;top:104px;width:13px;height:13px;background:#2d2d2d;"></div>
<div style="left:40px;top:117px;width:1048px;height:1px;background:#666666;"></div>
<div style="left:27px;top:116px;width:1077px;height:1px;background:#262626;"></div>
<svg style="left:29px;top:106px;" width="10" height="10" viewBox="0 0 10 10"><path d="M1 1l6 6M1 1v4M1 1h4" stroke="#6a7a8c" stroke-width="1" fill="none"/></svg>
<div style="left:1088px;top:117px;width:14.5px;height:15px;background:#ffffff;"></div>
<svg style="left:1091.5px;top:122px;" width="7" height="5" viewBox="0 0 7 5"><path d="M0.800 4.200l2.700-2.700 2.700 2.700" fill="none" stroke="#444" stroke-width="1.700"/></svg>
<div style="left:1087.5px;top:237px;width:15px;height:315.5px;background:#cfcfcf;"></div>
<div style="left:1088px;top:659px;width:14.5px;height:15px;background:#ffffff;"></div>
<svg style="left:1091.5px;top:665px;" width="7" height="5" viewBox="0 0 7 5"><path d="M0.800 0.800l2.700 2.700 2.700-2.700" fill="none" stroke="#444" stroke-width="1.700"/></svg>
<div style="left:1088px;top:674px;width:14.5px;height:15px;background:#656565;"></div>
<svg style="left:1090px;top:676px;" width="12" height="12" viewBox="0 0 12 12"><circle cx="4.500" cy="4.500" r="3.500" fill="none" stroke="#a0a0a0" stroke-width="1.200"/><path d="M7 7l4 4" stroke="#a0a0a0" stroke-width="1.500"/></svg>
<div style="left:40px;top:674px;width:531px;height:16px;background:#333333;"></div>
<div style="left:40px;top:674px;width:126px;height:1px;background:#707070;"></div>
<div style="left:571px;top:674px;width:17px;height:15px;background:#ffffff;"></div>
<svg style="left:577px;top:678.5px;" width="5" height="7" viewBox="0 0 5 7"><path d="M4 0.800l-2.700 2.700 2.700 2.700" fill="none" stroke="#444" stroke-width="1.700"/></svg>
<div style="left:644.5px;top:674px;width:371px;height:15px;background:#cdcdcd;"></div>
<div style="left:1072px;top:674px;width:16px;height:15px;background:#ffffff;"></div>
<svg style="left:1078px;top:678.5px;" width="5" height="7" viewBox="0 0 5 7"><path d="M1 0.800l2.700 2.700-2.700 2.700" fill="none" stroke="#444" stroke-width="1.700"/></svg>
<div style="left:27px;top:689px;width:1077px;height:2px;background:#242424;"></div>
<svg style="left:42px;top:676px;" width="10" height="12" viewBox="0 0 10 12"><path d="M0.600 11.400V3.500l3-3h5.800v11z" fill="none" stroke="#e0e0e0" stroke-width="1.100"/><path d="M3 7h4M5 5v4" stroke="#e0e0e0" stroke-width="1"/></svg>
<span style="left:57px;top:675px;height:14px;line-height:14px;font-size:6px;color:#3e3e3e;letter-spacing:-1px">&#9664;&#9664;</span>
<span style="left:74px;top:675px;height:14px;line-height:14px;font-size:6px;color:#3e3e3e;">&#9664;</span>
<span style="left:84px;top:675px;height:14px;line-height:14px;font-size:9px;color:#4a4a4a;">1</span>
<span style="left:94px;top:675px;height:14px;line-height:14px;font-size:9px;color:#444;">of</span>
<span style="left:107px;top:675px;height:14px;line-height:14px;font-size:9px;color:#4a4a4a;">2</span>
<svg style="left:121px;top:677px;" width="8" height="10" viewBox="0 0 8 10"><path d="M0.500 0.500v9l7-4.500z" fill="#fff"/></svg>
<svg style="left:133px;top:677px;" width="11" height="10" viewBox="0 0 11 10"><path d="M0.500 0.500v9l7-4.500z" fill="#fff"/><path d="M9.500 0v10" stroke="#fff" stroke-width="1.500"/></svg>
<svg style="left:148px;top:676px;" width="10" height="12" viewBox="0 0 10 12"><path d="M0.600 11.400V3.500l3-3h5.800v11z" fill="none" stroke="#e0e0e0" stroke-width="1.100"/><path d="M3 7h4M5 5v4" stroke="#e0e0e0" stroke-width="1"/></svg>
<svg style="left:164px;top:674px;" width="100" height="16" viewBox="0 0 100 16"><path d="M3 0.500l5 14h36l5-14" fill="#333" stroke="#9a9a9a" stroke-width="1"/><path d="M47.500 14.500l4.500-13.500h43l-5 13.500z" fill="#000" stroke="#8a8a8a" stroke-width="1"/></svg>
<span style="left:176px;top:675px;height:15px;line-height:15px;font-size:9.6px;color:#d8d8d8;">Page 1</span>
<span style="left:219px;top:675px;height:15px;line-height:15px;font-size:9.6px;color:#ffffff;">Page 2</span>
<div style="left:1104px;top:85px;width:2px;height:623px;background:#2b2b2b;"></div>
<div style="left:1106px;top:104px;width:264px;height:1px;background:#242424;"></div>
<span style="left:1111px;top:85px;height:19px;line-height:19px;font-size:9.35px;color:#e6e6e6;">Guidelines</span>
<svg style="left:1359px;top:90px;" width="9" height="9" viewBox="0 0 9 9"><path d="M0 0.500l4 4-4 4zM4.500 0.500l4 4-4 4z" fill="#858585"/></svg>
<svg style="left:1377px;top:90px;" width="9" height="9" viewBox="0 0 9 9"><path d="M0.500 0.500l8 8M8.500 0.500l-8 8" stroke="#858585" stroke-width="1.300"/></svg>
<div style="left:1109px;top:108px;width:21px;height:21px;background:#2a2a2a;border:1px solid #1c1c1c"></div>
<svg style="left:1112px;top:110px;" width="16" height="16" viewBox="0 0 16 16"><path d="M4.500 0v16M0 9.500h16" fill="none" stroke="#aaa" stroke-width="1" stroke-dasharray="2 1"/><ellipse cx="11" cy="3.500" rx="3.300" ry="2.200" fill="#e0e0e0"/><ellipse cx="11" cy="3.500" rx="1.500" ry="0.900" fill="#2a2a2a"/></svg>
<svg style="left:1138px;top:111px;" width="14" height="14" viewBox="0 0 14 14"><path d="M0 6.500h5" stroke="#e0e0e0" stroke-width="1.400"/><rect x="5" y="3" width="5" height="7" fill="none" stroke="#e0e0e0" stroke-width="1.300"/><path d="M11.500 0v14" stroke="#2a9a8a" stroke-width="1.200"/></svg>
<div style="left:1108px;top:131px;width:214px;height:23px;background:#2a2a2a;border:1px solid #1e1e1e"></div>
<div style="left:1109.5px;top:133px;width:194px;height:19px;background:#ffffff;"></div>
<svg style="left:1110px;top:142px;" width="193" height="2" viewBox="0 0 193 2"><path d="M0 1h193" stroke="#5a5ab4" stroke-width="1.600" stroke-dasharray="2.200 2.200"/></svg>
<svg style="left:1309px;top:140px;" width="7" height="4" viewBox="0 0 7 4"><path d="M0 0h7l-3.500 4z" fill="#e0e0e0"/></svg>
<div style="left:1324px;top:131px;width:46px;height:23px;background:#2a2a2a;border:1px solid #1e1e1e"></div>
<div style="left:1326.5px;top:133.5px;width:25.5px;height:18px;background:#0000ff;"></div>
<svg style="left:1358px;top:140px;" width="7" height="4" viewBox="0 0 7 4"><path d="M0 0h7l-3.500 4z" fill="#e0e0e0"/></svg>
<div style="left:1106px;top:159px;width:264px;height:1px;background:#2a2a2a;"></div>
<div style="left:1108px;top:162px;width:262px;height:21px;background:#2c2c2c;border:1px solid #1c1c1c"></div>
<span style="left:1113px;top:163px;height:19px;line-height:19px;font-size:9.7px;color:#e4e4e4;">Vertical</span>
<svg style="left:1358px;top:171px;" width="7" height="4" viewBox="0 0 7 4"><path d="M0 0h7l-3.500 4z" fill="#e0e0e0"/></svg>
<span style="left:1110px;top:187px;height:13px;line-height:13px;font-size:9.4px;color:#cfcfcf;">x:</span>
<div style="left:1119px;top:187px;width:115px;height:14px;background:#2b2b2b;border:1px solid #1c1c1c"></div>
<div style="left:1211px;top:188px;width:1px;height:12px;background:#1c1c1c;"></div>
<span style="left:1123px;top:187px;height:14px;line-height:14px;font-size:9.7px;color:#e4e4e4;">197.0 mm</span>
<svg style="left:1215px;top:192px;" width="5" height="3" viewBox="0 0 5 3"><path d="M0 0h5l-2.500 3z" fill="#e0e0e0"/></svg>
<svg style="left:1225px;top:192px;" width="5" height="3" viewBox="0 0 5 3"><path d="M0 0h5l-2.500 3z" fill="#e0e0e0"/></svg>
<div style="left:1119px;top:201px;width:115px;height:13px;background:#363636;border:1px solid #303030"></div>
<span style="left:1110px;top:201px;height:13px;line-height:13px;font-size:9.4px;color:#4a4a4a;">y:</span>
<span style="left:1125px;top:201px;height:13px;line-height:13px;font-size:9.7px;color:#4e4e4e;">-104.603 mm</span>
<div style="left:1247px;top:190px;width:12px;height:12px;background:#363636;border:1px solid #323232"></div>
<div style="left:1260px;top:186px;width:108px;height:21px;background:#353535;border:1px solid #303030"></div>
<span style="left:1265px;top:187px;height:20px;line-height:20px;font-size:9.7px;color:#505050;">90.0</span>
<div style="left:1108px;top:217px;width:127px;height:20px;background:#2e2e2e;border:1px solid #1e1e1e"></div>
<span style="left:1108px;top:217.7px;height:20px;line-height:20px;font-size:9.7px;color:#e0e0e0;width:127px;text-align:center">Add</span>
<div style="left:1241px;top:217px;width:129px;height:20px;background:#2e2e2e;border:1px solid #1e1e1e"></div>
<span style="left:1241px;top:217.7px;height:20px;line-height:20px;font-size:9.7px;color:#e0e0e0;width:129px;text-align:center">Modify</span>
<div style="left:1108px;top:239px;width:262px;height:442px;background:#2c2c2c;border:1px solid #1e1e1e"></div>
<span style="left:1115px;top:247px;height:14px;line-height:14px;font-size:9.7px;color:#2f7fd6;">Vertical</span>
<div style="left:1153px;top:254px;width:191px;height:1px;background:#2a6ab8;"></div>
<svg style="left:1352px;top:250px;" width="7" height="8" viewBox="0 0 7 8"><path d="M0 3.500l3.500-3.500 3.500 3.500zM0 8l3.500-3.500 3.500 3.500z" fill="#2f7fd6"/></svg>
<span style="left:1116px;top:267px;height:14px;line-height:14px;font-size:9.6px;color:#d8d8d8;">97.000 mm</span>
<span style="left:1116px;top:285px;height:14px;line-height:14px;font-size:9.6px;color:#d8d8d8;">197.000 mm</span>
<svg style="left:1329px;top:687px;" width="13" height="15" viewBox="0 0 13 15"><path d="M3.800 7.500V4.300a2.700 2.700 0 0 1 5.400 0V7.500" fill="none" stroke="#fff" stroke-width="1.600"/><rect x="0.500" y="7.500" width="12" height="7" fill="#fff"/><rect x="5.700" y="9.500" width="1.600" height="3" fill="#383838"/></svg>
<svg style="left:1353px;top:687px;" width="13" height="15" viewBox="0 0 13 15"><path d="M0 2.500h13M4 2.500v-2h5v2" fill="none" stroke="#e8e8e8" stroke-width="1.600"/><path d="M1.500 4h10l-.8 11h-8.400z" fill="#e8e8e8"/><path d="M4.700 6v7M8.300 6v7" stroke="#383838" stroke-width="1.200"/></svg>
<div style="left:1373.5px;top:474px;width:18.5px;height:233px;background:#2d2d2d;"></div>
<div style="left:1371.2px;top:104px;width:2.3px;height:604px;background:#3b6599;"></div>
<div style="left:1373px;top:104px;width:19px;height:88px;background:#0a6cdc;"></div>
<div style="left:1373px;top:191.5px;width:19px;height:86.5px;background:#454545;"></div>
<div style="left:1373px;top:279.5px;width:19px;height:114px;background:#454545;"></div>
<div style="left:1373px;top:395px;width:19px;height:79px;background:#454545;"></div>
<svg style="left:1376px;top:108px;" width="13" height="14" viewBox="0 0 13 14"><path d="M2.500 1v11" stroke="#fff" stroke-width="1.500" stroke-dasharray="2.500 1.500"/><path d="M2 2h11" stroke="#fff" stroke-width="1.500" stroke-dasharray="2.500 1.500"/></svg>
<span style="left:1373px;top:127px;font-size:9.600px;color:#d6e6ff;writing-mode:vertical-rl;line-height:19px;width:19px">Guidelines</span>
<svg style="left:1375px;top:195.5px;" width="15" height="14" viewBox="0 0 15 14"><circle cx="4.600" cy="4.600" r="2.700" fill="none" stroke="#f0f0f0" stroke-width="2.200"/><path d="M5.800 7v5.200" stroke="#f0f0f0" stroke-width="2"/><path d="M8.500 9.300h6M8.500 11.500h6" stroke="#f0f0f0" stroke-width="1.300"/></svg>
<span style="left:1373px;top:216px;font-size:9.600px;color:#dcdcdc;writing-mode:vertical-rl;line-height:19px;width:19px">Properties</span>
<svg style="left:1375.5px;top:283.5px;" width="14" height="13" viewBox="0 0 14 13"><path d="M2 1h10l1.500 11h-13z" fill="#0a0a0a"/><ellipse cx="4" cy="8.300" rx="2.300" ry="2.700" fill="none" stroke="#fff" stroke-width="1.500"/><ellipse cx="10" cy="8.300" rx="2.300" ry="2.700" fill="none" stroke="#fff" stroke-width="1.500"/><ellipse cx="4.500" cy="3.800" rx="1.500" ry="1.800" fill="none" stroke="#fff" stroke-width="1.300"/><ellipse cx="9.500" cy="3.800" rx="1.500" ry="1.800" fill="none" stroke="#fff" stroke-width="1.300"/><rect x="6" y="6.500" width="2" height="2.500" fill="#fff"/></svg>
<span style="left:1373px;top:303px;font-size:9.600px;color:#dcdcdc;writing-mode:vertical-rl;line-height:19px;width:19px">Find and Replace</span>
<svg style="left:1376px;top:400.5px;" width="12" height="13" viewBox="0 0 12 13"><path d="M6 1l5 3.500-5 3.500-5-3.500z" fill="none" stroke="#f0f0f0" stroke-width="1.400"/><path d="M1 7.500l5 3.500 5-3.500" fill="none" stroke="#f0f0f0" stroke-width="1.400"/></svg>
<span style="left:1373px;top:420px;font-size:9.600px;color:#dcdcdc;writing-mode:vertical-rl;line-height:19px;width:19px">Objects</span>
<svg style="left:1377px;top:479.5px;" width="11" height="11" viewBox="0 0 11 11"><path d="M5.500 0v11M0 5.500h11" stroke="#6a6a6a" stroke-width="1.400"/></svg>
<div style="left:1392px;top:85px;width:1.5px;height:623px;background:#2a2a2a;"></div>
<svg style="left:1399.5px;top:95px;" width="5" height="8" viewBox="0 0 5 8"><path d="M0 0l4.500 3.700-4.500 3.700z" fill="#e0e0e0"/></svg>
<svg style="left:1397px;top:111px;" width="8" height="6" viewBox="0 0 8 6"><path d="M1 5l3-3.500 3 3.500" fill="none" stroke="#444" stroke-width="1.400"/></svg>
<svg style="left:1397px;top:128px;" width="8" height="6" viewBox="0 0 8 6"><path d="M1 5l3-3.500 3 3.500" fill="none" stroke="#484848" stroke-width="1.400"/></svg>
<div style="left:1393.5px;top:141.0px;width:15.5px;height:15.42px;background:#ffffff;"></div>
<svg style="left:1394px;top:141.0px;" width="15.5" height="15" viewBox="0 0 15.5 15"><path d="M2 13.500L13.500 1.500" stroke="#ea7888" stroke-width="1.100"/></svg>
<div style="left:1393.5px;top:156.4px;width:15.5px;height:15.7px;background:#232323;"></div>
<div style="left:1393.5px;top:171.8px;width:15.5px;height:15.7px;background:#454040;"></div>
<div style="left:1393.5px;top:187.3px;width:15.5px;height:15.7px;background:#585858;"></div>
<div style="left:1393.5px;top:202.7px;width:15.5px;height:15.7px;background:#6a6a6a;"></div>
<div style="left:1393.5px;top:218.1px;width:15.5px;height:15.7px;background:#7c7c7c;"></div>
<div style="left:1393.5px;top:233.5px;width:15.5px;height:15.7px;background:#8f8f8f;"></div>
<div style="left:1393.5px;top:248.9px;width:15.5px;height:15.7px;background:#a3a3a3;"></div>
<div style="left:1393.5px;top:264.4px;width:15.5px;height:15.7px;background:#b8b8b8;"></div>
<div style="left:1393.5px;top:279.8px;width:15.5px;height:15.7px;background:#cbcbcb;"></div>
<div style="left:1393.5px;top:295.2px;width:15.5px;height:15.7px;background:#e2e2e2;"></div>
<div style="left:1393.5px;top:310.6px;width:15.5px;height:15.7px;background:#ffffff;"></div>
<div style="left:1393.5px;top:326.0px;width:15.5px;height:15.7px;background:#2e3192;"></div>
<div style="left:1393.5px;top:341.5px;width:15.5px;height:15.7px;background:#1aa3e4;"></div>
<div style="left:1393.5px;top:356.9px;width:15.5px;height:15.7px;background:#18a050;"></div>
<div style="left:1393.5px;top:372.3px;width:15.5px;height:15.7px;background:#ffec00;"></div>
<div style="left:1393.5px;top:387.7px;width:15.5px;height:15.7px;background:#ed1c24;"></div>
<div style="left:1393.5px;top:403.1px;width:15.5px;height:15.7px;background:#ec008c;"></div>
<div style="left:1393.5px;top:418.6px;width:15.5px;height:15.7px;background:#a4499c;"></div>
<div style="left:1393.5px;top:434.0px;width:15.5px;height:15.7px;background:#f7941d;"></div>
<div style="left:1393.5px;top:449.4px;width:15.5px;height:15.7px;background:#f4a6a8;"></div>
<div style="left:1393.5px;top:464.8px;width:15.5px;height:15.7px;background:#8c736b;"></div>
<div style="left:1393.5px;top:480.2px;width:15.5px;height:15.7px;background:#d0c8ea;"></div>
<div style="left:1393.5px;top:495.7px;width:15.5px;height:15.7px;background:#a79ad6;"></div>
<div style="left:1393.5px;top:511.1px;width:15.5px;height:15.7px;background:#7892d4;"></div>
<div style="left:1393.5px;top:526.5px;width:15.5px;height:15.7px;background:#7a6cba;"></div>
<div style="left:1393.5px;top:541.9px;width:15.5px;height:15.7px;background:#8a7ab2;"></div>
<div style="left:1393.5px;top:557.3px;width:15.5px;height:15.7px;background:#4a629c;"></div>
<div style="left:1393.5px;top:572.8px;width:15.5px;height:15.7px;background:#5a4a7a;"></div>
<div style="left:1393.5px;top:588.2px;width:15.5px;height:15.7px;background:#6a8aaa;"></div>
<div style="left:1393.5px;top:603.6px;width:15.5px;height:15.7px;background:#0a98dc;"></div>
<div style="left:1393.5px;top:619.0px;width:15.5px;height:15.7px;background:#98d8fa;"></div>
<div style="left:1393.5px;top:634.4px;width:15.5px;height:15.7px;background:#a8c8dc;"></div>
<div style="left:1393.5px;top:649.9px;width:15.5px;height:15.7px;background:#98a8b4;"></div>
<div style="left:1393.5px;top:665.3px;width:15.5px;height:7.0px;background:#6a86a0;"></div>
<svg style="left:1397px;top:676px;" width="9" height="6" viewBox="0 0 9 6"><path d="M1 1l3.500 3.500 3.500-3.500" fill="none" stroke="#5a5a5a" stroke-width="1.400"/></svg>
<svg style="left:1397px;top:691px;" width="10" height="8" viewBox="0 0 10 8"><path d="M1 1l3 3-3 3M5.500 1l3 3-3 3" fill="none" stroke="#555" stroke-width="1.300"/></svg>
<div style="left:0px;top:707px;width:1410px;height:1.5px;background:#242424;"></div>
<svg style="left:38px;top:695px;" width="5" height="8" viewBox="0 0 5 8"><path d="M0 0l4.500 4-4.500 4z" fill="#d0d0d0"/></svg>
<svg style="left:51px;top:692px;" width="14" height="14" viewBox="0 0 14 14"><path d="M2.500 10l6.500-7 2 2-6.500 7z" fill="#8494ac"/><path d="M1 13.500l1.200-3.500 2.500 2.500z" fill="#f0a050"/><path d="M8.500 2a2 2 0 0 1 3.500 3l-1 1-3-3z" fill="#f4f4f4"/></svg>
<svg style="left:72px;top:695px;" width="5" height="8" viewBox="0 0 5 8"><path d="M4.500 0.500l-3.500 3.500 3.500 3.500" fill="none" stroke="#4a4a4a" stroke-width="1.200"/></svg>
<div style="left:83px;top:691px;width:15.5px;height:15.5px;background:#ffffff;"></div>
<svg style="left:83px;top:691px;" width="15" height="15" viewBox="0 0 15 15"><path d="M2.500 13L13 2" stroke="#ee8898" stroke-width="1.100"/></svg>
<span style="left:446px;top:692px;height:14px;line-height:14px;font-size:9.3px;color:#636363;font-style:italic">Drag colors (or objects) here to store these colors with your document</span>
<svg style="left:1071px;top:695px;" width="6" height="9" viewBox="0 0 6 9"><path d="M1 0.500l4 4-4 4" fill="none" stroke="#4a4a4a" stroke-width="1.300"/></svg>
<svg style="left:1086px;top:695px;" width="10" height="9" viewBox="0 0 10 9"><path d="M1 0.500l4 4-4 4M5.500 0.500l4 4-4 4" fill="none" stroke="#4a4a4a" stroke-width="1.300"/></svg>
<svg style="left:8px;top:715.7px;" width="19" height="19" viewBox="0 0 20 20"><path d="M13.68 6.39 L15.73 6.94 L15.73 9.06 L13.68 9.61 L13.15 10.88 L14.21 12.71 L12.71 14.21 L10.88 13.15 L9.61 13.68 L9.06 15.73 L6.94 15.73 L6.39 13.68 L5.12 13.15 L3.29 14.21 L1.79 12.71 L2.85 10.88 L2.32 9.61 L0.27 9.06 L0.27 6.94 L2.32 6.39 L2.85 5.12 L1.79 3.29 L3.29 1.79 L5.12 2.85 L6.39 2.32 L6.94 0.27 L9.06 0.27 L9.61 2.32 L10.88 2.85 L12.71 1.79 L14.21 3.29 L13.15 5.12Z M11.200 8a3.200 3.200 0 1 0 -6.400 0a3.200 3.200 0 1 0 6.400 0Z" fill="#e0e0e0" fill-rule="evenodd"/><path d="M17 13v4H13z" fill="#e0e0e0"/></svg>
<span style="left:29px;top:716.5px;height:16px;line-height:16px;font-size:9.71px;color:#e4e4e4;">Click an object twice for rotating/skewing; dbl-clicking tool selects all objects; Shift+click multi-selects; Alt+click digs; Ctrl+click selects in a group</span>
<span style="left:664px;top:716.5px;height:16px;line-height:16px;font-size:9.6px;color:#e4e4e4;">Guideline on Guides</span>
<svg style="left:970px;top:714.5px;" width="18" height="18" viewBox="0 0 18 18"><path d="M8 1.800l6.300 6.300-6.300 6.300-6.300-6.300z" fill="none" stroke="#d8d8d8" stroke-width="1.900"/><path d="M4.800 8.300l3.200 3.200 3.200-3.200z" fill="#e05a5a"/><path d="M13.500 11l2.300 3.500-2 1.800-1.800-2.300z" fill="#d03040"/></svg>
<div style="left:989px;top:714px;width:18px;height:18.5px;background:#ffffff;"></div>
<svg style="left:989px;top:714px;" width="18" height="18" viewBox="0 0 18 18"><path d="M0.500 18L18 0.500" stroke="#c82c44" stroke-width="1.800"/></svg>
<span style="left:1011px;top:715px;height:16px;line-height:16px;font-size:9.6px;color:#e4e4e4;">None</span>
<svg style="left:1160.5px;top:714.5px;" width="8" height="18.5" viewBox="0 0 9 20"><path d="M4.500 1l3 5v5l-1.500 2h-3l-1.500-2V6z" fill="none" stroke="#d0d0d0" stroke-width="1.100"/><path d="M4.500 4v6" stroke="#d0d0d0" stroke-width="1"/><rect x="2" y="14.500" width="5" height="4" fill="none" stroke="#d0d0d0" stroke-width="1.100"/></svg>
<div style="left:1172px;top:713.5px;width:19.5px;height:19.5px;background:#0000ff;border:1px solid #3a3ab0"></div>
<span style="left:1194px;top:715px;height:16px;line-height:16px;font-size:9.6px;color:#e4e4e4;letter-spacing:-0.28px">R:0 G:0 B:255 (#0000FF)&nbsp; 0.000 pt</span>
<div style="left:1379px;top:711px;width:1px;height:24px;background:#2a2a2a;"></div>
<svg style="left:1386px;top:715px;" width="17" height="16" viewBox="0 0 17 16"><rect x="0.500" y="0.500" width="16" height="11.500" fill="#3a8ad8" stroke="#c8c8c8" stroke-width="1"/><rect x="1.500" y="1.500" width="14" height="5" fill="#e05858"/><path d="M5 15h7M8.500 12v3" stroke="#c8c8c8" stroke-width="1.400"/></svg>
</body></html>
